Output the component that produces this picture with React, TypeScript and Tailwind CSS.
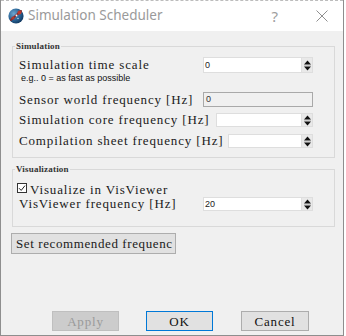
import React from 'react';

const serif = "font-['Liberation_Serif','Times_New_Roman',serif]";
const sans = "font-['Liberation_Sans',Arial,sans-serif]";

const SpinArrows: React.FC = () => (
  <span className="flex w-[11px] items-center justify-center bg-[#e9e9e9] border-l border-[#e0e0e0]">
    <svg width="7" height="11" viewBox="0 0 7 11">
      <polygon points="3.5,0.5 7,4.5 0,4.5" fill="#111" />
      <rect x="0" y="5.2" width="7" height="0.6" fill="#bdbdbd" />
      <polygon points="0,6.5 7,6.5 3.5,10.5" fill="#111" />
    </svg>
  </span>
);

interface SpinProps {
  className: string;
  value?: string;
}

const SpinBox: React.FC<SpinProps> = ({ className, value }) => (
  <div className={`flex bg-white border border-[#dedede] ${className}`}>
    <span className={`flex flex-1 items-center pl-[1px] text-[9px] leading-none text-[#222] ${sans}`}>{value}</span>
    <SpinArrows />
  </div>
);

interface GroupProps {
  title: string;
  className?: string;
  children: React.ReactNode;
}

const GroupBox: React.FC<GroupProps> = ({ title, className = '', children }) => (
  <div className={`relative ml-[11px] w-[323px] border border-[#d9d9d9] ${className}`}>
    <span className={`absolute -top-[6px] left-[2px] bg-[#f0f0f0] px-[1px] text-[9px] leading-[10px] font-bold text-[#333] tracking-[0.2px] ${serif}`}>
      {title}
    </span>
    {children}
  </div>
);

const Label: React.FC<{ children: React.ReactNode }> = ({ children }) => (
  <span className={`text-[13px] leading-[16px] tracking-[0.85px] text-[#1a1a1a] whitespace-nowrap ${serif}`}>{children}</span>
);

const AppIcon: React.FC = () => (
  <svg width="16" height="16" viewBox="0 0 16 16">
    <defs>
      <radialGradient id="globe" cx="0.35" cy="0.35" r="0.75">
        <stop offset="0" stopColor="#6fa6cf" />
        <stop offset="0.55" stopColor="#2a6597" />
        <stop offset="1" stopColor="#0d2f55" />
      </radialGradient>
    </defs>
    <circle cx="8" cy="8" r="7.6" fill="url(#globe)" />
    <path d="M3 12 L13 3" stroke="#8c2b2b" strokeWidth="2" strokeLinecap="round" />
    <circle cx="11.5" cy="4.5" r="2" fill="#c0392b" />
    <circle cx="5" cy="10" r="1.6" fill="#b03a2e" />
    <circle cx="8.5" cy="7.5" r="0.9" fill="#ffffff" />
    <circle cx="10" cy="10.5" r="0.7" fill="#dfe8f0" />
  </svg>
);

const DialogButton: React.FC<{ className: string; children: React.ReactNode }> = ({ className, children }) => (
  <button
    type="button"
    className={`flex h-[20px] items-center justify-center border text-[13px] leading-none tracking-[0.85px] ${serif} ${className}`}
  >
    {children}
  </button>
);

export default function App() {
  return (
    <div className="h-[336px] w-[346px] overflow-hidden bg-white">
      <div className="flex h-[336px] w-[344px] flex-col border-x border-b border-[#8e8e8e]">
        <div className="h-0 border-t border-dashed border-[#bcbcbc]" />

        {/* Title bar */}
        <div className="flex h-[30px] items-center bg-white">
          <span className="ml-[7px]">
            <AppIcon />
          </span>
          <span className="ml-[4px] font-['Noto_Sans','Open_Sans',sans-serif] text-[13.5px] leading-none text-[#9a9a9a]">
            Simulation Scheduler
          </span>
          <span className="ml-auto font-['Noto_Sans',sans-serif] text-[15px] leading-none text-[#9e9e9e]">?</span>
          <svg className="ml-[38px] mr-[15px]" width="12" height="12" viewBox="0 0 12 12">
            <path d="M0.5 0.5 L11.5 11.5 M11.5 0.5 L0.5 11.5" stroke="#8f8f8f" strokeWidth="1" />
          </svg>
        </div>

        {/* Body */}
        <div className="flex flex-1 flex-col bg-[#f0f0f0]">
          <GroupBox title="Simulation" className="mt-[15px] pb-[9px] pl-[6px] pr-[21px]">
            <div className="mt-[10px] flex items-start justify-between">
              <div className="flex flex-col">
                <Label>Simulation time scale</Label>
                <span className={`pl-[2px] text-[9px] leading-[10px] text-[#111] ${sans}`}>e.g.. 0 = as fast as possible</span>
              </div>
              <SpinBox className="h-[16px] w-[110px]" value="0" />
            </div>
            <div className="mt-[9px] flex h-[15px] items-center justify-between">
              <Label>Sensor world frequency [Hz]</Label>
              <div className={`flex h-[15px] w-[110px] items-center border border-[#a9a9a9] bg-[#f0f0f0] pl-[2px] text-[9px] leading-none text-[#333] ${sans}`}>
                0
              </div>
            </div>
            <div className="mt-[6px] flex h-[14px] items-center justify-between">
              <Label>Simulation core frequency [Hz]</Label>
              <SpinBox className="h-[14px] w-[97px]" />
            </div>
            <div className="mt-[7px] flex h-[14px] items-center justify-between">
              <Label>Compilation sheet frequency [Hz]</Label>
              <SpinBox className="h-[14px] w-[85px]" />
            </div>
          </GroupBox>

          <GroupBox title="Visualization" className="mt-[11px] pb-[15px] pr-[21px]">
            <div className="mt-[11px] flex h-[14px] items-center pl-[4px]">
              <span className="flex h-[10px] w-[10px] items-center justify-center border border-[#333] bg-white">
                <svg width="8" height="8" viewBox="0 0 8 8">
                  <path d="M1 4.2 L3.2 6.4 L7 1.6" fill="none" stroke="#222" strokeWidth="1" />
                </svg>
              </span>
              <span className="ml-[3px]">
                <Label>Visualize in VisViewer</Label>
              </span>
            </div>
            <div className="mt-[2px] flex h-[14px] items-center justify-between pl-[6px]">
              <Label>VisViewer frequency [Hz]</Label>
              <SpinBox className="h-[14px] w-[110px]" value="20" />
            </div>
          </GroupBox>

          <button
            type="button"
            className={`ml-[10px] mt-[6px] flex h-[21px] w-[165px] items-center whitespace-nowrap border border-[#adadad] bg-[#e1e1e1] pl-[4px] text-[13px] leading-none tracking-[0.6px] text-[#1a1a1a] ${serif}`}
          >
            Set recommended frequenc
          </button>

          <div className="mt-[57px] flex">
            <DialogButton className="ml-[51px] w-[67px] border-[#bfbfbf] bg-[#cccccc] text-[#9a9a9a]">Apply</DialogButton>
            <DialogButton className="ml-[27px] w-[67px] border-[#0078d7] bg-[#e1e1e1] text-[#111]">OK</DialogButton>
            <DialogButton className="ml-[28px] w-[68px] border-[#adadad] bg-[#e1e1e1] text-[#111]">Cancel</DialogButton>
          </div>
        </div>
      </div>
    </div>
  );
}
